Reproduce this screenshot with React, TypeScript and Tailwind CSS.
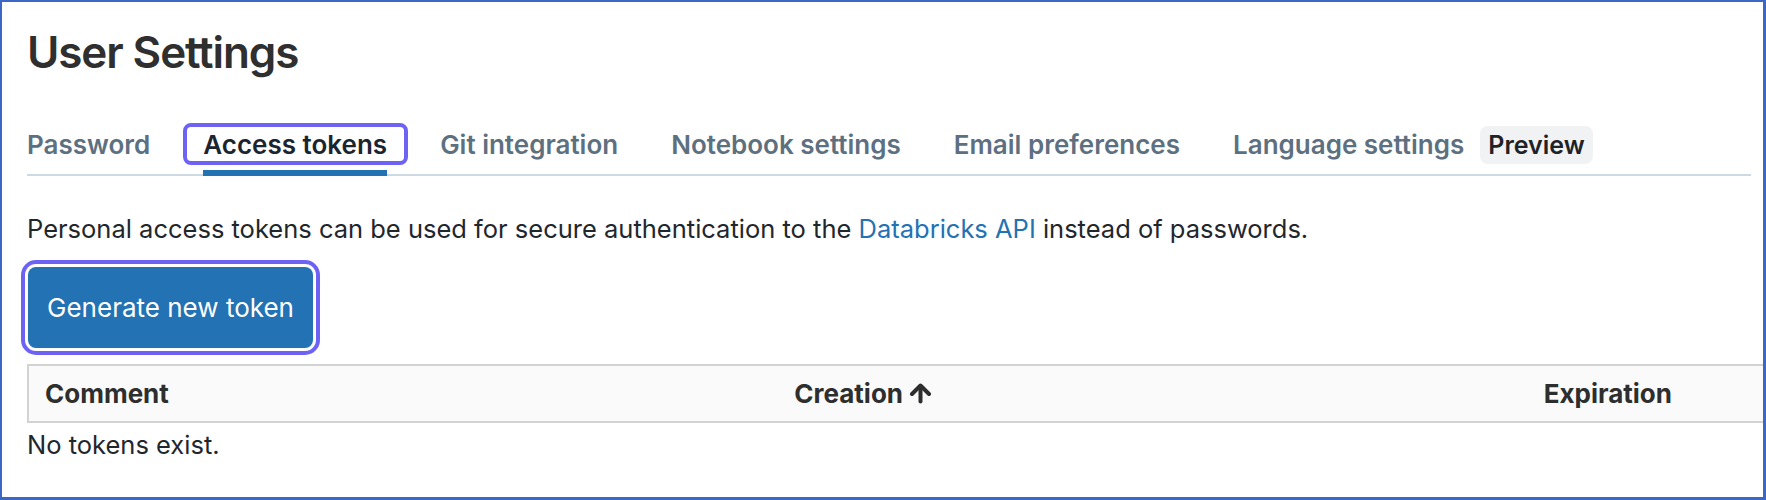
import React from 'react';

const tabs = ['Password', 'Access tokens', 'Git integration', 'Notebook settings', 'Email preferences', 'Language settings'];

function SortUp() {
    return (
        <svg width="23" height="21" viewBox="0 0 23 21" fill="none" stroke="currentColor" strokeWidth="4" strokeLinecap="round" strokeLinejoin="round">
            <path d="M11.5 18.5V4" />
            <path d="M3 11l8.5-8.5L20 11" />
        </svg>
    );
}

export default function App() {
    return (
        <div className="w-[1766px] h-[500px] overflow-hidden bg-white border-l-2 border-t-2 border-r-[3px] border-b-[3px] border-[#3a68c4] font-['Inter','Liberation_Sans',sans-serif]">
            <div className="pl-[25px]">
                <h1 className="pt-[28px] text-[44px] leading-none font-semibold tracking-[-0.025em] text-[#2f2f2f]">User Settings</h1>

                {/* tabs */}
                <div className="mt-[58px] mr-[12px] flex gap-[53px] border-b-2 border-[#cdd9e3]">
                    {tabs.map((t) => {
                        const active = t === 'Access tokens';
                        return (
                            <div key={t} className="relative pb-[16px] flex items-center gap-[16px]">
                                <span className={`text-[26px] leading-none font-semibold ${active ? 'text-[#1b2530]' : 'text-[#5d7080]'}`}>{t}</span>
                                {t === 'Language settings' && (
                                    <span className="-my-[6.5px] py-[6.5px] px-[8px] rounded-[8px] bg-[#f1f2f4] text-[25px] leading-none font-semibold text-[#1e2328]">Preview</span>
                                )}
                                {active && (
                                    <>
                                        <div className="absolute -left-[20px] -right-[21px] -top-[9px] bottom-[9px] rounded-[8px] border-4 border-[#6e62f5]" />
                                        <div className="absolute left-0 right-0 -bottom-[2px] h-[6px] bg-[#2272b4]" />
                                    </>
                                )}
                            </div>
                        );
                    })}
                </div>

                <p className="mt-[40px] text-[25.5px] leading-none text-[#1f272d]">
                    Personal access tokens can be used for secure authentication to the <a className="text-[#2272b4]">Databricks API</a> instead of passwords.
                </p>

                <button className="mt-[25.5px] ml-px h-[81px] w-[285px] rounded-[8px] bg-[#2272b4] text-white text-[26px] leading-none shadow-[0_0_0_3px_#ffffff,0_0_0_7px_#6e62f5]">
                    Generate new token
                </button>

                <div className="mt-[16px] w-[2250px] h-[59px] flex items-center bg-[#fafafa] border-y-2 border-l-2 border-[#d3d3d3] text-[26px] leading-none font-bold text-[#2e2e2e]">
                    <div className="w-[750px] pl-[16px]">Comment</div>
                    <div className="w-[750px] pl-[16px] flex items-center gap-[6px]">Creation <SortUp /></div>
                    <div className="w-[750px] pl-[16px]">Expiration</div>
                </div>

                <p className="mt-[9px] text-[25.5px] leading-none text-[#1f272d]">No tokens exist.</p>
            </div>
        </div>
    );
}
